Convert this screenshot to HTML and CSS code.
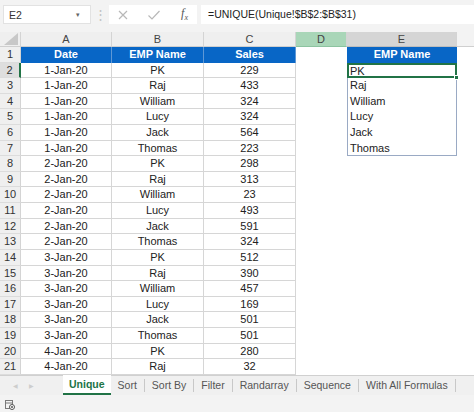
FILE: index.html
```html
<!DOCTYPE html>
<html>
<head>
<meta charset="utf-8">
<link rel="stylesheet" href="styles.css">
</head>
<body>
<div class="app">
  <div class="fbar">
    <div class="namebox"><span>E2</span><span class="caret">&#9662;</span></div>
    <div class="dots">&#8942;</div>
    <div class="fxbox">
      <svg class="ico" width="12" height="12" viewBox="0 0 12 12"><path d="M2 2 L10 10 M10 2 L2 10" stroke="#b8b8b8" stroke-width="1.2" fill="none"/></svg>
      <svg class="ico" width="14" height="12" viewBox="0 0 14 12"><path d="M1.5 6.5 L5 10 L12.5 2" stroke="#b8b8b8" stroke-width="1.2" fill="none"/></svg>
      <span class="fx">f<sub>x</sub></span>
    </div>
    <div class="formula">=UNIQUE(Unique!$B$2:$B$31)</div>
  </div>

  <div class="grid">
    <div class="ch corner"><svg width="14" height="12" viewBox="0 0 14 12"><path d="M14 0 L14 12 L0 12 Z" fill="#c8c8c8"/></svg></div>
    <div class="ch">A</div><div class="ch">B</div><div class="ch">C</div><div class="ch chd">D</div><div class="ch che">E</div><div class="ch chf"></div>

    <div class="rh">1</div><div class="c hd">Date</div><div class="c hd">EMP Name</div><div class="c hd">Sales</div><div class="c blank"></div><div class="c hd hde">EMP Name</div><div class="c blank"></div>

    <div class="rh rhsel">2</div><div class="c t">1-Jan-20</div><div class="c t">PK</div><div class="c t">229</div><div class="c blank"></div><div class="c sp sel">PK<span class="handle"></span></div><div class="c blank"></div>
    <div class="rh">3</div><div class="c t">1-Jan-20</div><div class="c t">Raj</div><div class="c t">433</div><div class="c blank"></div><div class="c sp">Raj</div><div class="c blank"></div>
    <div class="rh">4</div><div class="c t">1-Jan-20</div><div class="c t">William</div><div class="c t">324</div><div class="c blank"></div><div class="c sp">William</div><div class="c blank"></div>
    <div class="rh">5</div><div class="c t">1-Jan-20</div><div class="c t">Lucy</div><div class="c t">324</div><div class="c blank"></div><div class="c sp">Lucy</div><div class="c blank"></div>
    <div class="rh">6</div><div class="c t">1-Jan-20</div><div class="c t">Jack</div><div class="c t">564</div><div class="c blank"></div><div class="c sp">Jack</div><div class="c blank"></div>
    <div class="rh">7</div><div class="c t">1-Jan-20</div><div class="c t">Thomas</div><div class="c t">223</div><div class="c blank"></div><div class="c sp splast">Thomas</div><div class="c blank"></div>
    <div class="rh">8</div><div class="c t">2-Jan-20</div><div class="c t">PK</div><div class="c t">298</div><div class="c blank"></div><div class="c blank"></div><div class="c blank"></div>
    <div class="rh">9</div><div class="c t">2-Jan-20</div><div class="c t">Raj</div><div class="c t">313</div><div class="c blank"></div><div class="c blank"></div><div class="c blank"></div>
    <div class="rh">10</div><div class="c t">2-Jan-20</div><div class="c t">William</div><div class="c t">23</div><div class="c blank"></div><div class="c blank"></div><div class="c blank"></div>
    <div class="rh">11</div><div class="c t">2-Jan-20</div><div class="c t">Lucy</div><div class="c t">493</div><div class="c blank"></div><div class="c blank"></div><div class="c blank"></div>
    <div class="rh">12</div><div class="c t">2-Jan-20</div><div class="c t">Jack</div><div class="c t">591</div><div class="c blank"></div><div class="c blank"></div><div class="c blank"></div>
    <div class="rh">13</div><div class="c t">2-Jan-20</div><div class="c t">Thomas</div><div class="c t">324</div><div class="c blank"></div><div class="c blank"></div><div class="c blank"></div>
    <div class="rh">14</div><div class="c t">3-Jan-20</div><div class="c t">PK</div><div class="c t">512</div><div class="c blank"></div><div class="c blank"></div><div class="c blank"></div>
    <div class="rh">15</div><div class="c t">3-Jan-20</div><div class="c t">Raj</div><div class="c t">390</div><div class="c blank"></div><div class="c blank"></div><div class="c blank"></div>
    <div class="rh">16</div><div class="c t">3-Jan-20</div><div class="c t">William</div><div class="c t">457</div><div class="c blank"></div><div class="c blank"></div><div class="c blank"></div>
    <div class="rh">17</div><div class="c t">3-Jan-20</div><div class="c t">Lucy</div><div class="c t">169</div><div class="c blank"></div><div class="c blank"></div><div class="c blank"></div>
    <div class="rh">18</div><div class="c t">3-Jan-20</div><div class="c t">Jack</div><div class="c t">501</div><div class="c blank"></div><div class="c blank"></div><div class="c blank"></div>
    <div class="rh">19</div><div class="c t">3-Jan-20</div><div class="c t">Thomas</div><div class="c t">501</div><div class="c blank"></div><div class="c blank"></div><div class="c blank"></div>
    <div class="rh">20</div><div class="c t">4-Jan-20</div><div class="c t">PK</div><div class="c t">280</div><div class="c blank"></div><div class="c blank"></div><div class="c blank"></div>
    <div class="rh">21</div><div class="c t">4-Jan-20</div><div class="c t">Raj</div><div class="c t">32</div><div class="c blank"></div><div class="c blank"></div><div class="c blank"></div>
  </div>

  <div class="tabs">
    <div class="nav"><span>&#9664;</span><span>&#9654;</span></div>
    <div class="tab active">Unique</div>
    <div class="tab">Sort</div><div class="sep"></div>
    <div class="tab">Sort By</div><div class="sep"></div>
    <div class="tab">Filter</div><div class="sep"></div>
    <div class="tab">Randarray</div><div class="sep"></div>
    <div class="tab">Sequence</div><div class="sep"></div>
    <div class="tab">With All Formulas</div><div class="sep"></div>
  </div>

  <div class="status">
    <svg width="10" height="10" viewBox="0 0 10 10"><rect x="0.5" y="0.5" width="7" height="8" fill="none" stroke="#7a7a7a"/><path d="M0.5 3 H7.5" stroke="#7a7a7a"/><circle cx="7" cy="7" r="2.5" fill="#fff" stroke="#555"/><circle cx="7" cy="7" r="1" fill="#555"/></svg>
  </div>
</div>
</body>
</html>
```

FILE: styles.css
```css
* { box-sizing: border-box; }
html, body { margin: 0; padding: 0; }
body {
  width: 474px;
  height: 412px;
  overflow: hidden;
  background: #f3f3f3;
  font-family: "Liberation Sans Narrow", "Liberation Sans", Arial, sans-serif;
  font-size: 10px;
  color: #222;
}
.app { width: 474px; height: 412px; display: flex; flex-direction: column; }

.fbar {
  height: 32px;
  display: flex;
  align-items: flex-start;
  padding-top: 5px;
  background: #f3f3f3;
}
.namebox {
  margin-left: 3px;
  width: 88px;
  height: 19px;
  background: #fff;
  border: 1px solid #e2e2e2;
  display: flex;
  align-items: center;
  justify-content: space-between;
  padding: 0 10px 0 5px;
  font-family: "Liberation Sans", Arial, sans-serif;
  font-size: 10.5px;
  color: #333;
}
.caret { font-size: 7px; color: #666; }
.dots { width: 18px; text-align: center; color: #c2c2c2; font-size: 13px; line-height: 19px; }
.fxbox {
  width: 88px;
  height: 19px;
  background: #fff;
  display: flex;
  align-items: center;
  padding: 0 9px 0 8px;
  gap: 18px;
}
.fxbox .ico { display: block; }
.fx {
  font-family: "Liberation Serif", "Times New Roman", serif;
  font-style: italic;
  font-size: 12px;
  color: #555;
  margin-left: auto;
}
.fx sub { font-size: 8px; }
.formula {
  margin-left: 4px;
  flex: 1;
  height: 19px;
  background: #fff;
  padding-left: 7px;
  line-height: 19px;
  font-family: "Liberation Sans", Arial, sans-serif;
  font-size: 10.5px;
  color: #222;
}

.grid {
  display: grid;
  grid-template-columns: 21px 91px 92px 92px 51px 110px 17px;
  grid-template-rows: 15px repeat(21, 15.62px);
  background: #fff;
}
.ch {
  background: #efefef;
  border-right: 1px solid #d4d4d4;
  border-bottom: 1px solid #cfcfcf;
  text-align: center;
  font-size: 11px;
  line-height: 14px;
  color: #444;
}
.corner { display: flex; align-items: flex-end; justify-content: flex-end; padding: 0 2px 1px 0; }
.chd { background: #a9d6b8; border-bottom-color: #8cc3a0; }
.che { background: #d5d5d5; border-bottom-color: #bdbdbd; }
.chf { background: #f3f3f3; border-right: none; }
.rh {
  background: #efefef;
  border-right: 1px solid #d4d4d4;
  border-bottom: 1px solid #dcdcdc;
  text-align: center;
  font-size: 11px;
  line-height: 15px;
  color: #333;
}
.rhsel { background: #dedede; border-right: 2px solid #217346; }
.c {
  font-size: 11px;
  line-height: 15px;
  white-space: nowrap;
  overflow: visible;
}
.t {
  text-align: center;
  border-right: 1px solid #d6d6d6;
  border-bottom: 1px solid #d6d6d6;
  color: #222;
}
.hd {
  background: #0866c6;
  color: #fff;
  font-weight: bold;
  text-align: center;
  border-right: 1px solid #5e98d6;
}
.hde { border-right: none; }
.blank { background: #fff; }
.sp {
  border-left: 1px solid #9aaac4;
  border-right: 1px solid #9aaac4;
  padding-left: 2px;
  color: #222;
}
.splast { border-bottom: 1px solid #9aaac4; }
.sel {
  position: relative;
  border: 2px solid #217346;
  padding-left: 1px;
  line-height: 12px;
}
.handle {
  position: absolute;
  right: -4px;
  bottom: -4px;
  width: 5px;
  height: 5px;
  background: #217346;
  border: 1px solid #fff;
}

.tabs {
  height: 20px;
  display: flex;
  align-items: stretch;
  background: #f0f0f0;
  border-top: 1px solid #d0d0d0;
  font-family: "Liberation Sans", Arial, sans-serif;
  font-size: 10.5px;
  color: #555;
}
.nav { width: 63px; display: flex; gap: 11px; padding-left: 13px; align-items: center; color: #cdcdcd; font-size: 6px; }
.tab { padding: 0 7px; line-height: 18px; }
.tab.active {
  background: #fff;
  color: #217346;
  font-weight: bold;
  border-bottom: 2px solid #217346;
  padding: 0 6px;
  margin-top: -1px;
}
.sep { width: 1px; background: #c8c8c8; margin: 3px 0; }
.status {
  flex: 1;
  background: #f3f3f3;
  padding: 5px 0 0 5px;
}
.status svg { display: block; }
```
